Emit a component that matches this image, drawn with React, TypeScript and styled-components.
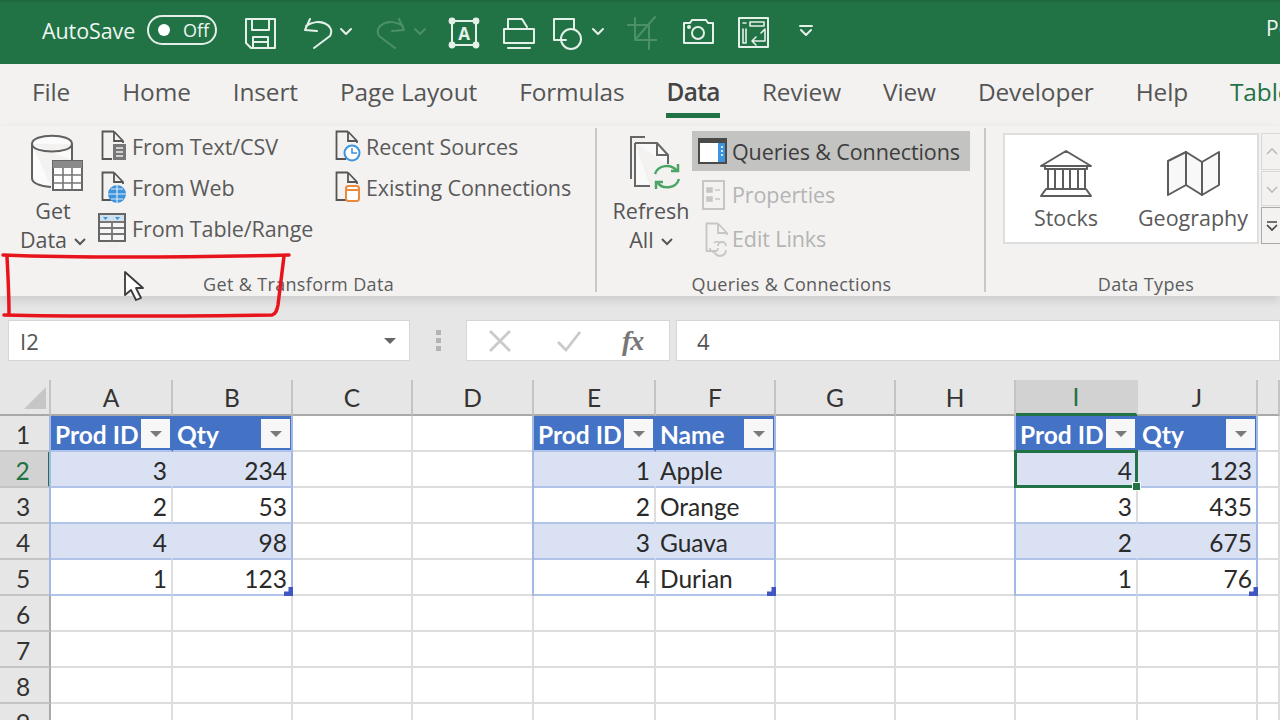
import React from "react";
import styled, { createGlobalStyle, css } from "styled-components";

const Global = createGlobalStyle`
  html, body { margin: 0; padding: 0; background: #e6e6e6; }
  #root { width: 1280px; height: 720px; overflow: hidden; position: relative; }
`;

const Page = styled.div`
  width: 1280px; height: 720px; overflow: hidden; position: relative;
  display: flex; flex-direction: column; background: #e6e6e6;
  font-family: "Open Sans", "Noto Sans", sans-serif;
`;

/* ---------- title bar ---------- */
const TitleBar = styled.header`
  height: 64px; flex: none; background: #217346; border-top: 2px solid #1c6a3e; box-sizing: border-box;
  display: flex; align-items: center; padding: 0 0 6px 42px; color: #eef5f0; position: relative; overflow: hidden;
`;
const AutoSave = styled.span`font-size: 21.5px; letter-spacing: -0.1px; width: 105px; flex: none;`;
const Toggle = styled.div`
  width: 70px; height: 30px; box-sizing: border-box; border: 2px solid #e4efe8; border-radius: 15px; flex: none;
  display: flex; align-items: center; padding-left: 9px; gap: 13px; font-size: 18px; margin-right: 28px;
`;
const Knob = styled.i`width: 12px; height: 12px; border-radius: 50%; background: #fff; display: block;`;
const Qat = styled.svg<{ $w: number; $gap?: number; $faded?: boolean }>`
  width: ${p => p.$w}px; height: 36px; flex: none; margin: 6px ${p => p.$gap ?? 0}px 0 0;
  fill: none; stroke: ${p => (p.$faded ? "#4b9069" : "#e6f0ea")}; stroke-width: 2; stroke-linecap: round; stroke-linejoin: round;
`;
const UserName = styled.span`position: absolute; left: 1266px; top: 12px; font-size: 21px;`;

/* ---------- tabs ---------- */
const Tabs = styled.nav`
  height: 62px; flex: none; background: #f3f2f1; display: flex; align-items: flex-start; padding-left: 32px; gap: 42px; white-space: nowrap;
`;
const Tab = styled.span<{ $active?: boolean; $accent?: boolean; $wide?: boolean }>`
  font-size: 24.4px; line-height: 32px; padding-top: 12px; letter-spacing: -0.1px; position: relative;
  margin-right: ${p => (p.$wide ? 10 : 0)}px;
  color: ${p => (p.$accent ? "#217346" : "#555")};
  ${p => p.$active && css`
    font-weight: 600; color: #444; letter-spacing: -0.6px;
    &::after { content: ""; position: absolute; left: 0; right: 0; top: 49px; height: 5px; background: #217346; }
  `}
`;

/* ---------- ribbon ---------- */
const Ribbon = styled.section`
  height: 170px; flex: none; background: #f3f2f1; display: flex; overflow: hidden; position: relative; z-index: 1;
  box-shadow: 0 4px 10px rgba(0,0,0,.12);
`;
const Group = styled.div<{ $w: number; $last?: boolean }>`
  width: ${p => p.$w}px; flex: none; display: flex; flex-direction: column; position: relative; box-sizing: border-box;
  ${p => !p.$last && css`
    &::after { content: ""; position: absolute; right: 0; top: 2px; bottom: 4px; width: 2px; background: #c8c8c8; }
  `}
`;
const GroupBody = styled.div<{ $cols: string; $pad: number; $gap?: number }>`
  flex: 1; display: grid; grid-template-columns: ${p => p.$cols}; column-gap: ${p => p.$gap ?? 0}px; padding-left: ${p => p.$pad}px; min-height: 0;
`;
const GroupLabel = styled.div`
  height: 28px; flex: none; text-align: center; font-size: 18px; line-height: 32px; color: #5c5c5c; letter-spacing: 0.35px; white-space: nowrap;
`;
const BigButton = styled.div`
  display: flex; flex-direction: column; align-items: center; padding-top: 8px; font-size: 21.5px; line-height: 29px; color: #555; white-space: nowrap;
`;
const BigIcon = styled.svg`width: 60px; height: 62px; flex: none; overflow: visible;`;
const Chev = styled.svg`
  width: 12px; height: 8px; margin-left: 7px; vertical-align: 2px; fill: none; stroke: #555; stroke-width: 2;
`;
const Stack = styled.div<{ $row: number; $top?: number }>`
  display: grid; grid-auto-rows: ${p => p.$row}px; align-content: start; padding-top: ${p => p.$top ?? 0}px;
`;
const SmallButton = styled.div<{ $off?: boolean; $on?: boolean }>`
  display: flex; align-items: center; height: 40px; white-space: nowrap; font-size: 21.5px; letter-spacing: -0.1px;
  color: ${p => (p.$off ? "#b4b4b4" : p.$on ? "#3c3c3c" : "#5a5a5a")};
  background: ${p => (p.$on ? "#c3c3c2" : "transparent")};
`;
const SmallIcon = styled.svg<{ $indent?: number }>`
  width: 34px; height: 32px; flex: none; overflow: visible; margin-left: ${p => p.$indent ?? 0}px;
`;
const OffLabel = styled.span`margin-left: -4px;`;

const Gallery = styled.div`
  margin-top: 7px; height: 111px; box-sizing: border-box; background: #fff; border: 2px solid #dedede;
  display: grid; grid-template-columns: 122px 132px; width: 256px; color: #5a5a5a; font-size: 21.5px;
`;
const GalleryItem = styled.div`
  display: flex; flex-direction: column; align-items: center; padding-top: 14px; line-height: 32px; white-space: nowrap;
`;
const GalleryIcon = styled.svg`
  width: 56px; height: 50px; margin-bottom: 3px; fill: none; stroke: #5c5c5c; stroke-width: 2; stroke-linejoin: round; stroke-linecap: round;
`;
const Scroller = styled.div`
  margin: 7px 0 0 2px; display: grid; grid-template-rows: 37px 35px 37px; gap: 1px; width: 30px; height: 111px;
`;
const ScrollBtn = styled.div<{ $on?: boolean }>`
  border: 1px solid ${p => (p.$on ? "#a9a9a9" : "#d8d8d8")}; background: #f3f2f1; display: flex; align-items: center; padding-left: 4px;
  svg { width: 12px; height: 12px; fill: none; stroke: ${p => (p.$on ? "#444" : "#bdbdbd")}; stroke-width: 1.6; }
`;

/* ---------- formula bar ---------- */
const FormulaBar = styled.div`
  margin-top: 24px; height: 41px; flex: none; display: flex; padding-left: 8px; color: #555; font-size: 22px;
`;
const WhiteBox = styled.div<{ $w?: number }>`
  ${p => (p.$w ? `width: ${p.$w}px; flex: none;` : "flex: 1;")}
  background: #fff; box-sizing: border-box; border: 1px solid #d6d6d6; display: flex; align-items: center;
`;
const NameBox = styled(WhiteBox)`padding: 0 13px 0 11px; justify-content: space-between;`;
const NameArrow = styled.i`
  width: 0; height: 0; border-left: 6px solid transparent; border-right: 6px solid transparent; border-top: 6px solid #666; display: block;
`;
const Grip = styled.div`
  width: 56px; flex: none; display: flex; flex-direction: column; gap: 3px; align-items: center; justify-content: center;
  i { width: 5px; height: 5px; background: #b3b3b3; display: block; }
`;
const FxButtons = styled(WhiteBox)`padding-left: 20px; margin-right: 6px;`;
const FxIcon = styled.svg<{ $gap: number }>`
  width: 26px; height: 26px; flex: none; margin-right: ${p => p.$gap}px; fill: none; stroke: #cacaca; stroke-width: 2.8;
`;
const Fx = styled.span`
  font-family: "Liberation Serif", serif; font-style: italic; font-weight: 700; font-size: 28px; color: #777; letter-spacing: -1px;
`;
const FormulaInput = styled(WhiteBox)`padding-left: 20px;`;

/* ---------- sheet ---------- */
const Sheet = styled.div`
  margin-top: 19px; flex: 1; display: grid; overflow: hidden; background: #fff;
  grid-template-columns: 51px 122px 120px 120px 121px 122px 120px 120px 120px 122px 120px 22px;
  grid-auto-rows: 36px; font-family: Lato, "Liberation Sans", sans-serif; font-size: 24.5px; color: #2a2a2a;
`;
const Corner = styled.div`
  background: #e6e6e6; border-right: 2px solid #c4c4c4; border-bottom: 2px solid #a8a8a8; box-sizing: border-box; position: relative;
  &::after { content: ""; position: absolute; right: 3px; bottom: 5px; border-style: solid; border-width: 0 0 22px 22px; border-color: transparent transparent #c6c6c6 transparent; }
`;
const ColHead = styled.div<{ $sel?: boolean }>`
  background: ${p => (p.$sel ? "#d2d2d2" : "#e6e6e6")}; box-sizing: border-box; display: flex; align-items: center; justify-content: center;
  border-right: 2px solid ${p => (p.$sel ? "#d2d2d2" : "#c4c4c4")};
  border-bottom: ${p => (p.$sel ? "3px solid #217346" : "2px solid #a8a8a8")};
  color: ${p => (p.$sel ? "#217346" : "#333")};
`;
const RowHead = styled.div<{ $sel?: boolean }>`
  background: ${p => (p.$sel ? "#d2d2d2" : "#e6e6e6")}; box-sizing: border-box; display: flex; align-items: center; justify-content: center;
  border-right: ${p => (p.$sel ? "3px solid #217346" : "2px solid #a8a8a8")};
  border-bottom: 2px solid #c4c4c4; padding: 2px 3px 0 0;
  color: ${p => (p.$sel ? "#217346" : "#333")};
`;
type Kind = "empty" | "head" | "band" | "plain";
const Cell = styled.div<{ $kind: Kind; $first?: boolean; $last?: boolean; $left?: boolean }>`
  box-sizing: border-box; position: relative; display: flex; align-items: center; white-space: nowrap;
  justify-content: ${p => (p.$left ? "flex-start" : "flex-end")};
  padding: 2px 4px 0 4px;
  background: ${p => (p.$kind === "head" ? "#4472c4" : p.$kind === "band" ? "#d9e1f2" : "#fff")};
  border-bottom: 2px solid ${p => (p.$kind === "empty" ? "#dddddd" : "#b1c3e8")};
  border-right: 2px solid ${p =>
    p.$last ? "#a3b8e3" : p.$kind === "empty" || p.$kind === "plain" ? "#dddddd" : "transparent"};
  ${p => p.$first && "box-shadow: -2px 0 0 #a3b8e3;"}
  ${p => p.$kind === "head" && css`color: #fff; font-weight: 700; justify-content: flex-start;`}
`;
const FilterBtn = styled.i`
  position: absolute; right: 1px; top: 3px; width: 29px; height: 29px; background: #f7f7f7; display: flex; align-items: center; justify-content: center;
  &::after { content: ""; border-left: 6px solid transparent; border-right: 6px solid transparent; border-top: 6px solid #7a7a7a; }
`;
const ResizeMark = styled.i`
  position: absolute; right: -2px; bottom: -2px; width: 9px; height: 9px; background: #3f57c0;
  clip-path: polygon(100% 0, 100% 100%, 0 100%, 0 50%, 50% 50%, 50% 0);
`;
const Selection = styled.i`
  position: absolute; left: -2px; top: -2px; right: -2px; bottom: -2px; border: 3px solid #217346; pointer-events: none; z-index: 2;
  &::after { content: ""; position: absolute; right: -6px; bottom: -6px; width: 7px; height: 7px; background: #217346; border: 1px solid #fff; }
`;

/* ---------- annotation ---------- */
const Overlay = styled.svg`position: absolute; left: 0; top: 0; width: 1280px; height: 720px; pointer-events: none; z-index: 5;`;

/* ---------- data ---------- */
const cols = ["A","B","C","D","E","F","G","H","I","J",""];
type T = { start: number; heads: string[]; rows: (string|number)[][]; leftSecond?: boolean };
const tables: T[] = [
  { start: 0, heads: ["Prod ID","Qty"], rows: [[3,234],[2,53],[4,98],[1,123]] },
  { start: 4, heads: ["Prod ID","Name"], rows: [[1,"Apple"],[2,"Orange"],[3,"Guava"],[4,"Durian"]], leftSecond: true },
  { start: 8, heads: ["Prod ID","Qty"], rows: [[4,123],[3,435],[2,675],[1,76]] },
];

const Doc = ({ stroke = "#555" }: { stroke?: string }) => (
  <path d="M16 1.500H4.500V29H14M16 1.500L25 11V13M16 1.500V11H25" fill="none" stroke={stroke} strokeWidth="1.8" />
);

function renderCells(rowIndex: number) {
  return cols.map((_, c) => {
    const key = `${rowIndex}-${c}`;
    for (const t of tables) {
      const i = c - t.start;
      if (i < 0 || i > 1 || rowIndex > 4) continue;
      const first = i === 0, last = i === 1;
      if (rowIndex === 0)
        return <Cell key={key} $kind="head" $first={first} $last={last}>{t.heads[i]}<FilterBtn /></Cell>;
      const band = rowIndex % 2 === 1;
      const isLastRow = rowIndex === 4 && last;
      return (
        <Cell key={key} $kind={band ? "band" : "plain"} $first={first} $last={last} $left={last && t.leftSecond}>
          {t.rows[rowIndex - 1][i]}
          {isLastRow && <ResizeMark />}
          {t.start === 8 && rowIndex === 1 && first && <Selection />}
        </Cell>
      );
    }
    return <Cell key={key} $kind="empty" />;
  });
}

export default function App() {
  return (
    <Page>
      <Global />
      <TitleBar>
        <AutoSave>AutoSave</AutoSave>
        <Toggle><Knob /><span>Off</span></Toggle>
        <Qat $w={31} $gap={27} viewBox="0 0 31 36">
          <path d="M1 4H30V33H6L1 28Z" /><path d="M7 4V15H24V4M8 33V22H23V33M8 27H23" />
        </Qat>
        <Qat $w={30} $gap={7} viewBox="0 0 30 36">
          <path d="M7 4L2 15L14 16M3 11C16 2 33 10 27 21L11 33" />
        </Qat>
        <Qat $w={12} $gap={24} viewBox="0 0 12 36"><path d="M1 14L6 19L11 14" /></Qat>
        <Qat $w={30} $gap={8} $faded viewBox="0 0 30 36">
          <path d="M23 4L28 15L16 16M27 11C14 2 -3 10 3 21L19 33" />
        </Qat>
        <Qat $w={12} $gap={22} $faded viewBox="0 0 12 36"><path d="M1 14L6 19L11 14" /></Qat>
        <Qat $w={32} $gap={23} viewBox="0 0 32 36">
          <rect x="4" y="6" width="24" height="24" />
          <circle cx="4" cy="6" r="2.4" fill="#e6f0ea" /><circle cx="28" cy="6" r="2.4" fill="#e6f0ea" />
          <circle cx="4" cy="30" r="2.4" fill="#e6f0ea" /><circle cx="28" cy="30" r="2.4" fill="#e6f0ea" />
          <text x="16" y="25" textAnchor="middle" fontSize="17" fontWeight="700" fill="#e6f0ea" stroke="none" fontFamily="Open Sans">A</text>
        </Qat>
        <Qat $w={32} $gap={17} viewBox="0 0 32 36">
          <path d="M5 13V4H19L24 12M1 14H31V28H1ZM5 33H27" />
        </Qat>
        <Qat $w={32} $gap={8} viewBox="0 0 32 36">
          <path d="M14 25H2V4H22V14" /><circle cx="19" cy="24" r="10" />
        </Qat>
        <Qat $w={12} $gap={23} viewBox="0 0 12 36"><path d="M1 14L6 19L11 14" /></Qat>
        <Qat $w={30} $gap={25} $faded viewBox="0 0 30 36">
          <path d="M0 10H22V34M8 3V25H30M8 25L28 2" />
        </Qat>
        <Qat $w={32} $gap={23} viewBox="0 0 32 36">
          <path d="M2 8H8L10 5H24L26 8H31V28H2Z" /><circle cx="16" cy="18" r="6" /><circle cx="7" cy="12" r="1" />
        </Qat>
        <Qat $w={32} $gap={30} viewBox="0 0 32 36">
          <rect x="2" y="3" width="29" height="29" />
          <path d="M6 8H9M13 7H27V11H13ZM6 14V28H9V14M28 15V26H15M24 18L28 14M15 26L19 22M15 26L19 30" strokeWidth="1.6" />
        </Qat>
        <Qat $w={14} viewBox="0 0 14 36"><path d="M1 11H13M2 15L7 20L12 15" /></Qat>
        <UserName>Pe</UserName>
      </TitleBar>

      <Tabs>
        <Tab $wide>File</Tab><Tab>Home</Tab><Tab>Insert</Tab><Tab>Page Layout</Tab><Tab>Formulas</Tab>
        <Tab $active>Data</Tab><Tab>Review</Tab><Tab>View</Tab><Tab>Developer</Tab><Tab>Help</Tab><Tab $accent>Table Design</Tab>
      </Tabs>

      <Ribbon>
        <Group $w={597}>
          <GroupBody $cols="70px 224px auto" $pad={18} $gap={10}>
            <BigButton>
              <BigIcon viewBox="0 0 60 62">
                <path d="M9 10V44C9 49 17 52 28 53M9 10C9 -1 49 -1 49 10V26M9 10C9 20 49 20 49 10" fill="#fbfbfb" stroke="#606060" strokeWidth="2" />
                <rect x="30" y="27" width="29" height="29" fill="#fff" stroke="#666" strokeWidth="2" />
                <rect x="30" y="27" width="29" height="7" fill="#8a8a8a" />
                <path d="M30 41H59M30 49H59M40 34V56M49 34V56" stroke="#777" strokeWidth="1.6" />
              </BigIcon>
              <span>Get</span>
              <span>Data<Chev viewBox="0 0 12 8"><path d="M1 1L6 6L11 1" /></Chev></span>
            </BigButton>
            <Stack $row={41}>
              <SmallButton>
                <SmallIcon viewBox="0 0 34 32"><Doc /><rect x="15" y="14" width="13" height="16" fill="#777" /><path d="M18 18H25M18 22H25M18 26H25" stroke="#eee" strokeWidth="1.5" /></SmallIcon>
                From Text/CSV
              </SmallButton>
              <SmallButton>
                <SmallIcon viewBox="0 0 34 32"><Doc /><circle cx="19" cy="23" r="9" fill="#3d94dc" /><path d="M10 23H28M19 14V32M13 18H25M13 28H25" stroke="#dcecf8" strokeWidth="1.2" /></SmallIcon>
                From Web
              </SmallButton>
              <SmallButton>
                <SmallIcon viewBox="0 0 34 32">
                  <rect x="1" y="2" width="26" height="27" fill="#f6f6f6" stroke="#666" strokeWidth="2" />
                  <rect x="2" y="3" width="24" height="7" fill="#cfe0ef" />
                  <path d="M5 5H10L7.500 8ZM17 5H22L19.500 8Z" fill="#3d94dc" />
                  <path d="M2 10H26M2 16H26M2 22H26M14 10V29" stroke="#777" strokeWidth="1.8" />
                </SmallIcon>
                From Table/Range
              </SmallButton>
            </Stack>
            <Stack $row={41}>
              <SmallButton>
                <SmallIcon viewBox="0 0 34 32"><Doc /><circle cx="20" cy="23" r="7.500" fill="#fff" stroke="#3d94dc" strokeWidth="2" /><path d="M20 18V23H25" fill="none" stroke="#3d94dc" strokeWidth="1.6" /></SmallIcon>
                Recent Sources
              </SmallButton>
              <SmallButton>
                <SmallIcon viewBox="0 0 34 32"><Doc /><rect x="14" y="15" width="13" height="15" rx="2.500" fill="#fff" stroke="#e98a3c" strokeWidth="2" /><path d="M14 19H27" stroke="#e98a3c" strokeWidth="2" /></SmallIcon>
                Existing Connections
              </SmallButton>
            </Stack>
          </GroupBody>
          <GroupLabel>Get &amp; Transform Data</GroupLabel>
        </Group>

        <Group $w={389}>
          <GroupBody $cols="74px 278px" $pad={17} $gap={4}>
            <BigButton>
              <BigIcon viewBox="0 0 60 62">
                <path d="M24 3H10V45" fill="none" stroke="#666" strokeWidth="2" />
                <path d="M14 9H36L47 21V30M14 9V52H29" fill="#f9f9f9" stroke="#666" strokeWidth="2" />
                <path d="M36 9V21H47" fill="none" stroke="#666" strokeWidth="2" />
                <path d="M34 40C37 31 50 29 56 37M58 45C55 55 41 56 36 48" fill="none" stroke="#4aa564" strokeWidth="2.500" />
                <path d="M50 37H57V30M42 48H35V55" fill="none" stroke="#4aa564" strokeWidth="2.500" />
              </BigIcon>
              <span>Refresh</span>
              <span>All<Chev viewBox="0 0 12 8"><path d="M1 1L6 6L11 1" /></Chev></span>
            </BigButton>
            <Stack $row={43.5} $top={5}>
              <SmallButton $on>
                <SmallIcon $indent={6} viewBox="0 0 34 32">
                  <rect x="1" y="4" width="27" height="24" fill="#fff" stroke="#4a4a4a" strokeWidth="2" />
                  <rect x="1" y="4" width="27" height="4" fill="#4a4a4a" />
                  <rect x="20" y="8" width="7" height="19" fill="#3d94dc" />
                  <path d="M23 12H25M23 16H25M23 20H25" stroke="#fff" strokeWidth="1.5" />
                </SmallIcon>
                Queries &amp; Connections
              </SmallButton>
              <SmallButton $off>
                <SmallIcon $indent={10} viewBox="0 0 34 32">
                  <rect x="1" y="2" width="21" height="28" fill="none" stroke="#c6c6c6" strokeWidth="2" />
                  <path d="M5 9H10V13H5ZM5 18H10V22H5ZM13 11H18M13 20H18" fill="#c6c6c6" stroke="#c6c6c6" strokeWidth="1.500" />
                </SmallIcon>
                <OffLabel>Properties</OffLabel>
              </SmallButton>
              <SmallButton $off>
                <SmallIcon $indent={10} viewBox="0 0 34 32">
                  <Doc stroke="#c6c6c6" />
                  <path d="M12 21a4 4 0 0 1 6 0M8 26a4 4 0 0 0 8 0M24 24a4 4 0 0 0-8 0M12 28a4 4 0 0 0 12 0" fill="none" stroke="#c6c6c6" strokeWidth="1.800" />
                </SmallIcon>
                <OffLabel>Edit Links</OffLabel>
              </SmallButton>
            </Stack>
          </GroupBody>
          <GroupLabel>Queries &amp; Connections</GroupLabel>
        </Group>

        <Group $w={320} $last>
          <GroupBody $cols="256px auto" $pad={17}>
            <Gallery>
              <GalleryItem>
                <GalleryIcon viewBox="0 0 56 50">
                  <path d="M3 17L28 2L53 17ZM7 17V20H49V17M10 20V40M17 20V40M25 20V40M32 20V40M40 20V40M47 20V40M8 40H48L53 47H3Z" />
                </GalleryIcon>
                Stocks
              </GalleryItem>
              <GalleryItem>
                <GalleryIcon viewBox="0 0 56 50">
                  <path d="M3 12L21 3L37 13L54 3V36L37 46L21 36L3 46Z" fill="#f8f8f8" />
                  <path d="M21 3V36M37 13V46" />
                </GalleryIcon>
                Geography
              </GalleryItem>
            </Gallery>
            <Scroller>
              <ScrollBtn><svg viewBox="0 0 12 12"><path d="M1 8L6 3L11 8" /></svg></ScrollBtn>
              <ScrollBtn><svg viewBox="0 0 12 12"><path d="M1 4L6 9L11 4" /></svg></ScrollBtn>
              <ScrollBtn $on><svg viewBox="0 0 12 12"><path d="M1 2H11M1 5L6 10L11 5" /></svg></ScrollBtn>
            </Scroller>
          </GroupBody>
          <GroupLabel>Data Types</GroupLabel>
        </Group>
      </Ribbon>

      <FormulaBar>
        <NameBox $w={402}>I2<NameArrow /></NameBox>
        <Grip><i /><i /><i /></Grip>
        <FxButtons $w={204}>
          <FxIcon $gap={43} viewBox="0 0 26 26"><path d="M3 3L23 23M23 3L3 23" /></FxIcon>
          <FxIcon $gap={40} viewBox="0 0 26 26"><path d="M2 14L10 22L24 4" /></FxIcon>
          <Fx>fx</Fx>
        </FxButtons>
        <FormulaInput>4</FormulaInput>
      </FormulaBar>

      <Sheet>
        <Corner />
        {cols.map((c, i) => <ColHead key={i} $sel={c === "I"}>{c}</ColHead>)}
        {[0,1,2,3,4,5,6,7,8].map(r => (
          <React.Fragment key={r}>
            <RowHead $sel={r === 1}>{r + 1}</RowHead>
            {renderCells(r)}
          </React.Fragment>
        ))}
      </Sheet>

      <Overlay viewBox="0 0 1280 720">
        <g fill="none" stroke="#e8141c" strokeWidth="3.500" strokeLinecap="round">
          <path d="M3 255C80 258 200 257 289 255" />
          <path d="M7 257C8 275 9 295 9 314" />
          <path d="M4 315C90 317 190 316 272 315C276 314 277 310 278 305L284 256" />
        </g>
        <path d="M125 272V295L131 290L136 300L141 298L136 288L143 288Z" fill="#fff" stroke="#3a3a3a" strokeWidth="1.800" strokeLinejoin="round" />
      </Overlay>
    </Page>
  );
}
